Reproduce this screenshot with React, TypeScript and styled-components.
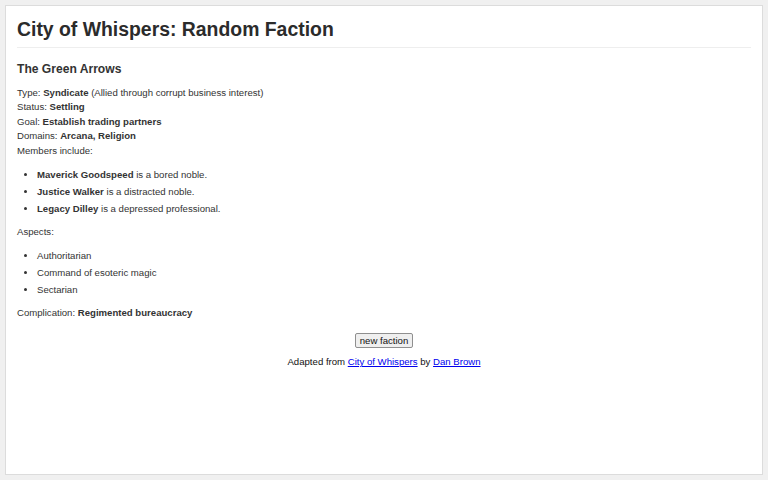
import styled, { createGlobalStyle } from "styled-components";

const GlobalStyle = createGlobalStyle`
  html, body {
    margin: 0;
    padding: 0;
    background: #f0f0f0;
    font-family: "Liberation Sans", Arial, sans-serif;
  }
`;

const Page = styled.div`
  padding: 5px;
  height: 480px;
  box-sizing: border-box;
`;

const Card = styled.div`
  background: #fff;
  border: 1px solid #dcdcdc;
  height: 470px;
  box-sizing: border-box;
  padding: 11px 11px;
  color: #333;
  font-size: 9.6px;
  line-height: 14.4px;
`;

const Title = styled.h1`
  margin: 0;
  font-size: 19.4px;
  line-height: 24px;
  font-weight: bold;
  color: #2b2b2b;
  padding-bottom: 6px;
  border-bottom: 1px solid #eee;
`;

const FactionName = styled.h2`
  margin: 13px 0 9px;
  font-size: 12.1px;
  line-height: 16px;
  font-weight: bold;
  color: #333;
`;

const Line = styled.div``;

const Para = styled.p`
  margin: 8px 0;
`;

const List = styled.ul`
  margin: 8px 0;
  padding-left: 20px;
  line-height: 17px;
`;

const Centered = styled.div`
  text-align: center;
  margin-top: 12px;
`;

const Button = styled.button`
  font-family: "Liberation Sans", Arial, sans-serif;
  font-size: 9.6px;
  color: #111;
  background: #efefef;
  border: 1px solid #8f8f8f;
  border-radius: 2px;
  padding: 1px 4px;
  height: 15px;
  line-height: 11px;
`;

const Credit = styled.div`
  margin-top: 7px;
  color: #111;
  text-align: center;
`;

const Link = styled.a`
  color: #0000ee;
  text-decoration: underline;
`;

const members = [
  { name: "Maverick Goodspeed", desc: "is a bored noble." },
  { name: "Justice Walker", desc: "is a distracted noble." },
  { name: "Legacy Dilley", desc: "is a depressed professional." },
];

const aspects = ["Authoritarian", "Command of esoteric magic", "Sectarian"];

export default function App() {
  return (
    <>
      <GlobalStyle />
      <Page>
        <Card>
          <Title>City of Whispers: Random Faction</Title>
          <FactionName>The Green Arrows</FactionName>
          <Line>
            Type: <b>Syndicate</b> (Allied through corrupt business interest)
          </Line>
          <Line>
            Status: <b>Settling</b>
          </Line>
          <Line>
            Goal: <b>Establish trading partners</b>
          </Line>
          <Line>
            Domains: <b>Arcana, Religion</b>
          </Line>
          <Line>Members include:</Line>
          <List>
            {members.map((m) => (
              <li key={m.name}>
                <b>{m.name}</b> {m.desc}
              </li>
            ))}
          </List>
          <Para>Aspects:</Para>
          <List>
            {aspects.map((a) => (
              <li key={a}>{a}</li>
            ))}
          </List>
          <Para>
            Complication: <b>Regimented bureaucracy</b>
          </Para>
          <Centered>
            <Button>new faction</Button>
          </Centered>
          <Credit>
            Adapted from <Link href="#">City of Whispers</Link> by{" "}
            <Link href="#">Dan Brown</Link>
          </Credit>
        </Card>
      </Page>
    </>
  );
}
